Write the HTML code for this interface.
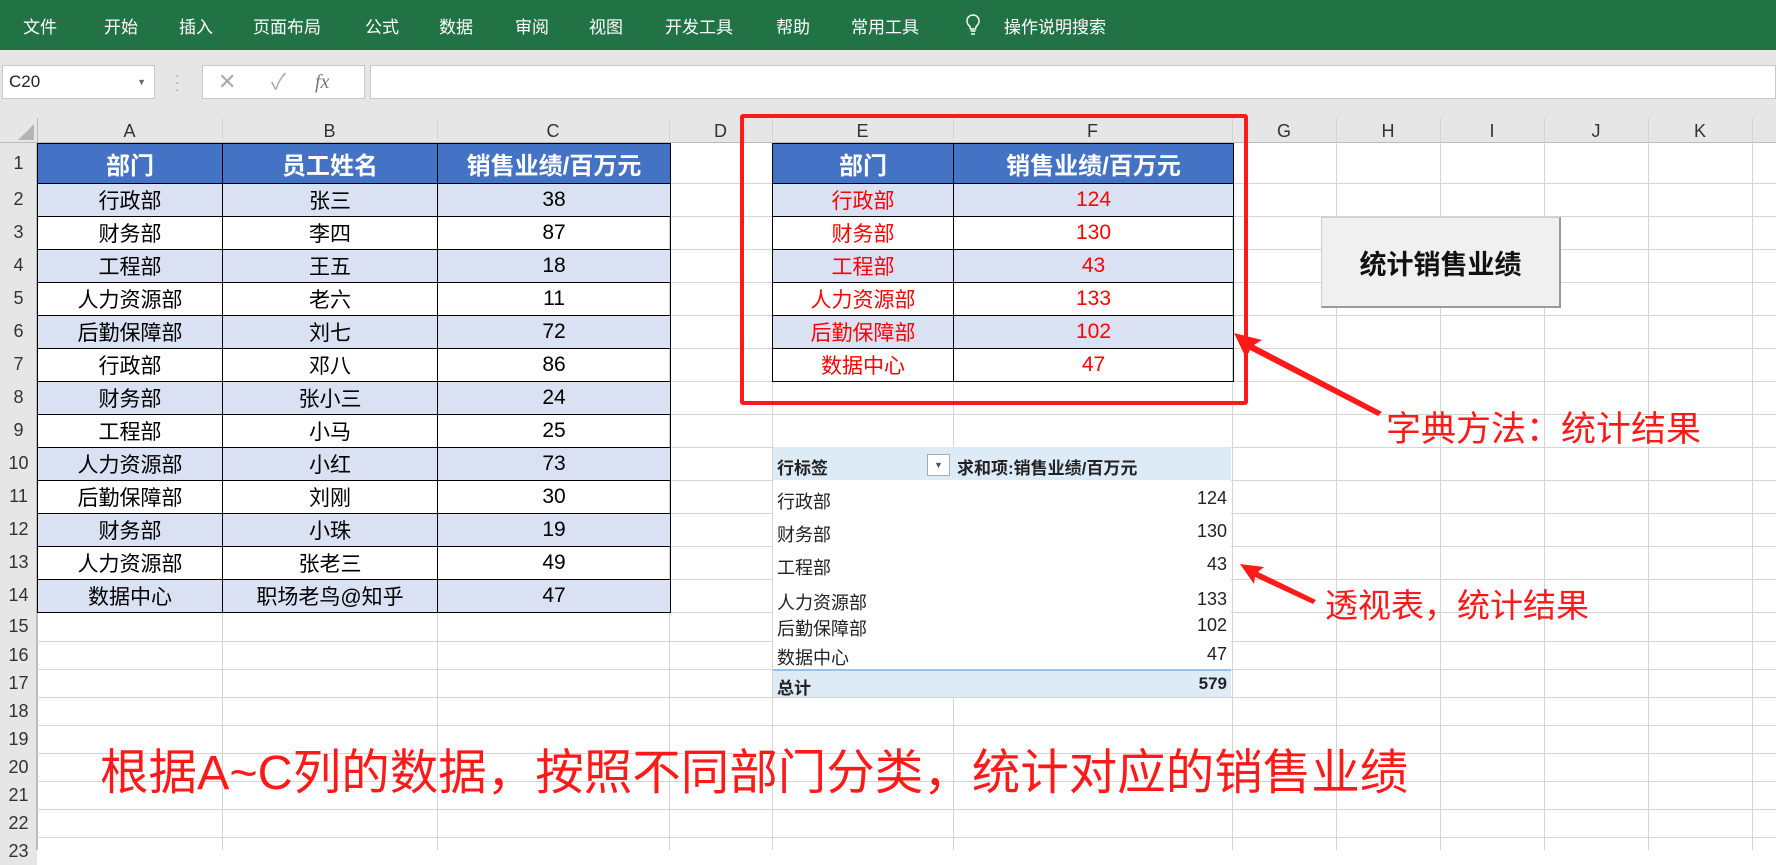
<!DOCTYPE html>
<html><head><meta charset="utf-8"><style>
*{margin:0;padding:0}
body{width:1776px;height:850px;position:relative;overflow:hidden;background:#fff;font-family:"Liberation Sans","Noto Sans CJK SC",sans-serif}
.a{position:absolute}
.rib{left:0;top:0;width:1776px;height:50px;background:#217346}
.rib span{position:absolute;top:13px;color:#fff;font-size:17px}
.fb{left:0;top:50px;width:1776px;height:93px;background:#e6e6e6}
.vl{position:absolute;top:118px;height:732px;border-left:1px solid #d4d4d4}
.hl{position:absolute;left:0;width:1776px;border-top:1px solid #d4d4d4}
.ch{position:absolute;top:118px;height:25px;font-size:18px;color:#333;text-align:center;line-height:26px}
.rh{position:absolute;left:0;width:37px;font-size:18px;color:#333;text-align:center;background:#e6e6e6;display:flex;align-items:center;justify-content:center}
table{position:absolute;border-collapse:collapse;table-layout:fixed}
td{border:1px solid #000;text-align:center;font-size:21px;padding:0;white-space:nowrap}
tr.h td{background:#4472c4;color:#fff;font-weight:bold;font-size:24px;height:39px}
tr td{height:32px}
tr.b td{background:#d9e1f2}
.red td{color:#f00}
.red tr.h td{color:#fff}
.pv{position:absolute;left:773px;width:458px;font-size:18px;color:#222}
.pv span{position:absolute}
</style></head><body>
<div class="a rib">
<span style="left:23px">文件</span><span style="left:104px">开始</span><span style="left:179px">插入</span><span style="left:253px">页面布局</span><span style="left:365px">公式</span><span style="left:439px">数据</span><span style="left:515px">审阅</span><span style="left:589px">视图</span><span style="left:665px">开发工具</span><span style="left:776px">帮助</span><span style="left:851px">常用工具</span>
<svg style="position:absolute;left:964px;top:13px" width="18" height="24" viewBox="0 0 18 24"><path d="M9 2a6 6 0 0 0-4 10.5c1 1 1.5 2 1.5 3.5h5c0-1.5.5-2.5 1.5-3.5A6 6 0 0 0 9 2zM6.5 18h5M7 21h4" fill="none" stroke="#fff" stroke-width="1.5"/></svg>
<span style="left:1004px">操作说明搜索</span>
</div>
<div class="a fb"></div>
<div class="a" style="left:2px;top:65px;width:153px;height:34px;background:#fff;border:1px solid #c6c6c6;box-sizing:border-box;font-size:17px;line-height:32px;padding-left:6px;color:#222">C20<span style="position:absolute;right:8px;top:0;font-size:9px;color:#666">▼</span></div>
<div class="a" style="left:175px;top:72px;color:#999;font-size:14px;line-height:7px">·<br>·<br>·</div>
<div class="a" style="left:202px;top:65px;width:163px;height:34px;background:#fff;border:1px solid #c6c6c6;box-sizing:border-box;color:#aaa;font-size:22px;line-height:32px">
<span style="position:absolute;left:15px">✕</span><span style="position:absolute;left:68px">✓</span><span style="position:absolute;left:112px;font-family:'Liberation Serif',serif;font-style:italic;color:#777;font-size:20px">fx</span></div>
<div class="a" style="left:370px;top:65px;width:1406px;height:34px;background:#fff;border:1px solid #c6c6c6;box-sizing:border-box"></div>
<div class="a" style="left:0;top:118px;width:1776px;height:25px;background:#e6e6e6;border-bottom:1px solid #bbb;box-sizing:border-box"></div>
<svg class="a" style="left:18px;top:124px" width="16" height="16"><path d="M16 0V16H0z" fill="#b5b5b5"/></svg>
<div class="vl" style="left:37px;border-color:#bbb"></div><div class="vl" style="left:222px"></div><div class="vl" style="left:437px"></div><div class="vl" style="left:669px"></div><div class="vl" style="left:772px"></div><div class="vl" style="left:953px"></div><div class="vl" style="left:1232px"></div><div class="vl" style="left:1336px"></div><div class="vl" style="left:1440px"></div><div class="vl" style="left:1544px"></div><div class="vl" style="left:1648px"></div><div class="vl" style="left:1752px"></div>
<div class="hl" style="top:183px"></div><div class="hl" style="top:216px"></div><div class="hl" style="top:249px"></div><div class="hl" style="top:282px"></div><div class="hl" style="top:315px"></div><div class="hl" style="top:348px"></div><div class="hl" style="top:381px"></div><div class="hl" style="top:414px"></div><div class="hl" style="top:447px"></div><div class="hl" style="top:480px"></div><div class="hl" style="top:513px"></div><div class="hl" style="top:546px"></div><div class="hl" style="top:579px"></div><div class="hl" style="top:612px"></div><div class="hl" style="top:641px"></div><div class="hl" style="top:669px"></div><div class="hl" style="top:697px"></div><div class="hl" style="top:725px"></div><div class="hl" style="top:753px"></div><div class="hl" style="top:781px"></div><div class="hl" style="top:809px"></div><div class="hl" style="top:837px"></div>
<div class="ch" style="left:37px;width:185px">A</div><div class="ch" style="left:222px;width:215px">B</div><div class="ch" style="left:437px;width:232px">C</div><div class="ch" style="left:669px;width:103px">D</div><div class="ch" style="left:772px;width:181px">E</div><div class="ch" style="left:953px;width:279px">F</div><div class="ch" style="left:1232px;width:104px">G</div><div class="ch" style="left:1336px;width:104px">H</div><div class="ch" style="left:1440px;width:104px">I</div><div class="ch" style="left:1544px;width:104px">J</div><div class="ch" style="left:1648px;width:104px">K</div>
<div class="rh" style="top:143px;height:40px">1</div><div class="rh" style="top:183px;height:33px">2</div><div class="rh" style="top:216px;height:33px">3</div><div class="rh" style="top:249px;height:33px">4</div><div class="rh" style="top:282px;height:33px">5</div><div class="rh" style="top:315px;height:33px">6</div><div class="rh" style="top:348px;height:33px">7</div><div class="rh" style="top:381px;height:33px">8</div><div class="rh" style="top:414px;height:33px">9</div><div class="rh" style="top:447px;height:33px">10</div><div class="rh" style="top:480px;height:33px">11</div><div class="rh" style="top:513px;height:33px">12</div><div class="rh" style="top:546px;height:33px">13</div><div class="rh" style="top:579px;height:33px">14</div><div class="rh" style="top:612px;height:29px">15</div><div class="rh" style="top:641px;height:28px">16</div><div class="rh" style="top:669px;height:28px">17</div><div class="rh" style="top:697px;height:28px">18</div><div class="rh" style="top:725px;height:28px">19</div><div class="rh" style="top:753px;height:28px">20</div><div class="rh" style="top:781px;height:28px">21</div><div class="rh" style="top:809px;height:28px">22</div><div class="rh" style="top:837px;height:28px">23</div>
<div class="a" style="left:36px;top:143px;height:707px;border-left:1px solid #bbb"></div>
<table style="left:37px;top:143px;width:633px">
<colgroup><col style="width:185px"><col style="width:215px"><col style="width:233px"></colgroup>
<tr class="h"><td>部门</td><td>员工姓名</td><td>销售业绩/百万元</td></tr>
<tr class="b"><td>行政部</td><td>张三</td><td>38</td></tr>
<tr><td>财务部</td><td>李四</td><td>87</td></tr>
<tr class="b"><td>工程部</td><td>王五</td><td>18</td></tr>
<tr><td>人力资源部</td><td>老六</td><td>11</td></tr>
<tr class="b"><td>后勤保障部</td><td>刘七</td><td>72</td></tr>
<tr><td>行政部</td><td>邓八</td><td>86</td></tr>
<tr class="b"><td>财务部</td><td>张小三</td><td>24</td></tr>
<tr><td>工程部</td><td>小马</td><td>25</td></tr>
<tr class="b"><td>人力资源部</td><td>小红</td><td>73</td></tr>
<tr><td>后勤保障部</td><td>刘刚</td><td>30</td></tr>
<tr class="b"><td>财务部</td><td>小珠</td><td>19</td></tr>
<tr><td>人力资源部</td><td>张老三</td><td>49</td></tr>
<tr class="b"><td>数据中心</td><td>职场老鸟@知乎</td><td>47</td></tr>
</table>
<table class="red" style="left:772px;top:143px;width:461px">
<colgroup><col style="width:181px"><col style="width:280px"></colgroup>
<tr class="h"><td>部门</td><td>销售业绩/百万元</td></tr>
<tr class="b"><td>行政部</td><td>124</td></tr>
<tr><td>财务部</td><td>130</td></tr>
<tr class="b"><td>工程部</td><td>43</td></tr>
<tr><td>人力资源部</td><td>133</td></tr>
<tr class="b"><td>后勤保障部</td><td>102</td></tr>
<tr><td>数据中心</td><td>47</td></tr>
</table>
<div class="a" style="left:740px;top:114px;width:508px;height:291px;border:4px solid #ff1a1a;border-radius:3px;box-sizing:border-box"></div>
<div class="a" style="left:1321px;top:217px;width:240px;height:91px;background:#f0f0f0;border:1px solid #ccc;border-right:2px solid #999;border-bottom:2px solid #999;box-sizing:border-box;display:flex;align-items:center;justify-content:center;font-size:27px;font-weight:bold;color:#111">统计销售业绩</div>
<div class="pv" style="top:447px;height:33px;background:#ddebf7;border-bottom:1px solid #9bc2e6;font-weight:bold;font-size:17px"><span style="left:4px;top:7px">行标签</span><span style="left:154px;top:7px;width:23px;height:22px;background:#fff;border:1px solid #aaa;box-sizing:border-box;font-size:9px;text-align:center;line-height:20px;color:#555;font-weight:normal">▼</span><span style="left:184px;top:7px">求和项:销售业绩/百万元</span></div>
<div class="pv" style="top:480px;height:33px;background:#fff"><span style="left:4px;top:8px">行政部</span><span style="right:4px;top:8px">124</span></div>
<div class="pv" style="top:513px;height:33px;background:#fff"><span style="left:4px;top:8px">财务部</span><span style="right:4px;top:8px">130</span></div>
<div class="pv" style="top:546px;height:33px;background:#fff"><span style="left:4px;top:8px">工程部</span><span style="right:4px;top:8px">43</span></div>
<div class="pv" style="top:579px;height:33px;background:#fff"><span style="left:4px;top:10px">人力资源部</span><span style="right:4px;top:10px">133</span></div>
<div class="pv" style="top:612px;height:29px;background:#fff"><span style="left:4px;top:3px">后勤保障部</span><span style="right:4px;top:3px">102</span></div>
<div class="pv" style="top:641px;height:28px;background:#fff"><span style="left:4px;top:3px">数据中心</span><span style="right:4px;top:3px">47</span></div>
<div class="pv" style="top:669px;height:28px;background:#ddebf7;border-top:2px solid #9bc2e6;box-sizing:border-box;font-weight:bold;font-size:17px"><span style="left:4px;top:3px">总计</span><span style="right:4px;top:3px">579</span></div>
<svg class="a" style="left:0;top:0" width="1776" height="850"><polygon points="1234,333 1262,340 1254,345 1382,412 1378,416 1250,350 1246,358" fill="#ff1a1a"/><polygon points="1240,564 1264,567 1258,572 1316,600 1313,604 1255,577 1254,584" fill="#ff1a1a"/></svg>
<div class="a" style="left:1386px;top:401px;font-size:35px;color:#ff1a1a">字典方法：统计结果</div>
<div class="a" style="left:1325px;top:579px;font-size:33px;color:#ff1a1a">透视表，统计结果</div>
<div class="a" style="left:100px;top:733px;font-size:48.5px;color:#ff1a1a;white-space:nowrap">根据A~C列的数据，按照不同部门分类，统计对应的销售业绩</div>
</body></html>
